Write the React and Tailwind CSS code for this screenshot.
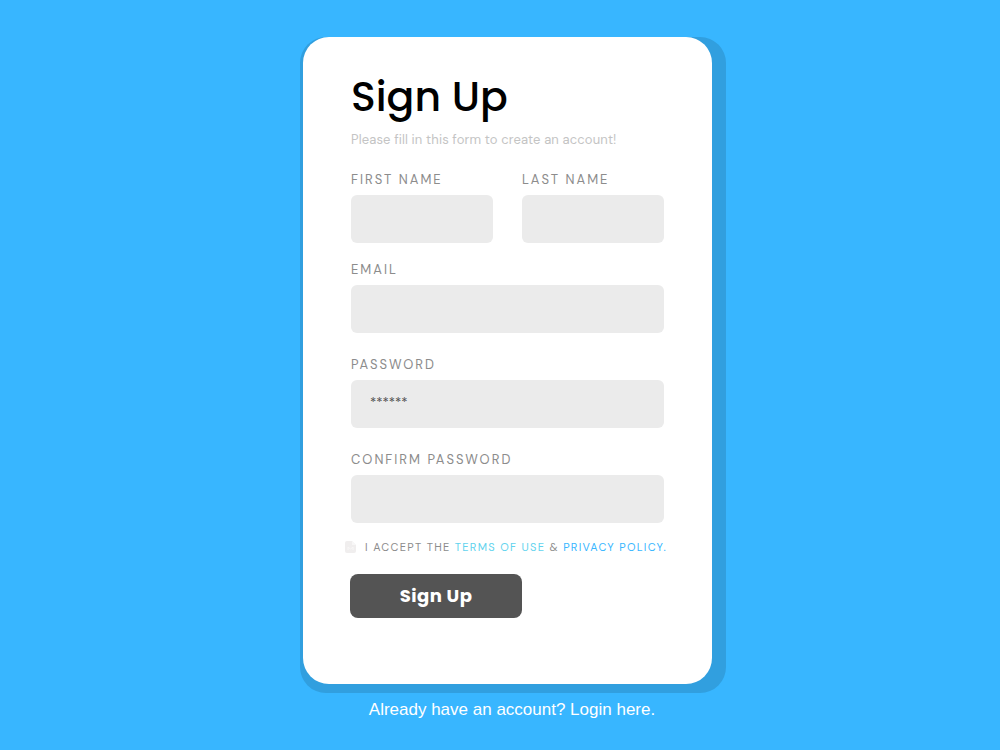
import { useState } from "react";

const Field = ({ id, label, type = "text", placeholder, className = "", value, onChange }) => (
  <div className={`flex flex-col gap-1 ${className}`}>
    <label
      htmlFor={id}
      className="text-[13px] leading-[22px] tracking-[2px] whitespace-nowrap text-[#8c8c8c] uppercase"
    >
      {label}
    </label>
    <input
      id={id}
      name={id}
      type={type}
      placeholder={placeholder}
      value={value}
      onChange={onChange}
      className="h-12 w-full rounded-md bg-[#ebebeb] px-[19px] pb-1 text-[13px] text-[#545454] placeholder:text-[#545454] outline-none"
    />
  </div>
);

const SignUp = () => {
  const [form, setForm] = useState({
    firstName: "",
    lastName: "",
    email: "",
    password: "",
    confirmPassword: ""
  });
  const [accepted, setAccepted] = useState(false);

  const handleChange = (e) => {
    setForm({ ...form, [e.target.name]: e.target.value });
  };

  const handleSubmit = (e) => {
    e.preventDefault();
  };

  return (
    <div className="min-h-screen bg-[#38b6ff] px-4 pt-[37px] pb-7 flex flex-col items-center font-['DM_Sans','Open_Sans',sans-serif]">
      {/* Card with its darker backing */}
      <main className="w-full max-w-[426px] ml-[26px] rounded-[26px] bg-[#319fdf] pl-[3px] pr-[14px] pb-[9px]">
        <form onSubmit={handleSubmit} className="rounded-[26px] bg-white px-12 pt-9 pb-[66px]">
          <h1 className="font-['Poppins','Inter',sans-serif] text-[41px] leading-12 font-medium text-black">
            Sign Up
          </h1>
          <p className="mt-[9px] text-[13px] leading-5 tracking-[0.01em] text-[#c4c4c4]">
            Please fill in this form to create an account!
          </p>

          <div className="mt-[19px] grid grid-cols-2 gap-[29px]">
            <Field id="firstName" label="First Name" value={form.firstName} onChange={handleChange} />
            <Field id="lastName" label="Last Name" value={form.lastName} onChange={handleChange} />
          </div>
          <Field id="email" label="Email" type="email" className="mt-4" value={form.email} onChange={handleChange} />
          <Field
            id="password"
            label="Password"
            type="password"
            placeholder="******"
            className="mt-[21px]"
            value={form.password}
            onChange={handleChange}
          />
          <Field
            id="confirmPassword"
            label="Confirm Password"
            type="password"
            className="mt-[21px]"
            value={form.confirmPassword}
            onChange={handleChange}
          />

          {/* Terms */}
          <div className="mt-[14px] -mx-1.5 flex items-center gap-[9px]">
            <span className="relative flex shrink-0">
              <input
                id="terms"
                type="checkbox"
                checked={accepted}
                onChange={(e) => setAccepted(e.target.checked)}
                className="h-3 w-[11px] appearance-none rounded-xs checked:outline-1 checked:outline-[#38b6ff]"
              />
              <svg viewBox="0 0 11 12" className="pointer-events-none absolute inset-0 h-3 w-[11px]">
                <path d="M2 0H7L11 4V10A2 2 0 0 1 9 12H2A2 2 0 0 1 0 10V2A2 2 0 0 1 2 0Z" fill="#f0eeee" />
                <path d="M7 0V4H11" fill="#f8f7f7" />
                <path d="M3 9V6L5.5 8L8 6V9" fill="none" stroke="#f8f7f7" />
              </svg>
            </span>
            <label
              htmlFor="terms"
              className="text-[11px] leading-5 tracking-[0.12em] whitespace-nowrap text-[#8c8c8c] uppercase"
            >
              I accept the{" "}
              <a href="#terms-of-use" className="text-[#62d3ee]">Terms of Use</a> &amp;{" "}
              <a href="#privacy" className="text-[#38b6ff]">Privacy Policy.</a>
            </label>
          </div>

          <button
            type="submit"
            className="-ml-px mt-[17px] h-11 w-[172px] rounded-lg bg-[#545454] pb-0.5 font-['Poppins','Inter',sans-serif] text-[18px] font-bold tracking-wide text-white"
          >
            Sign Up
          </button>
        </form>
      </main>

      <p className="mt-[5px] ml-6 font-['Liberation_Sans',Arial,sans-serif] text-[17px] leading-6 text-white">
        Already have an account? <a href="#login">Login here.</a>
      </p>
    </div>
  );
};

export default function App() {
  return <SignUp />;
}
